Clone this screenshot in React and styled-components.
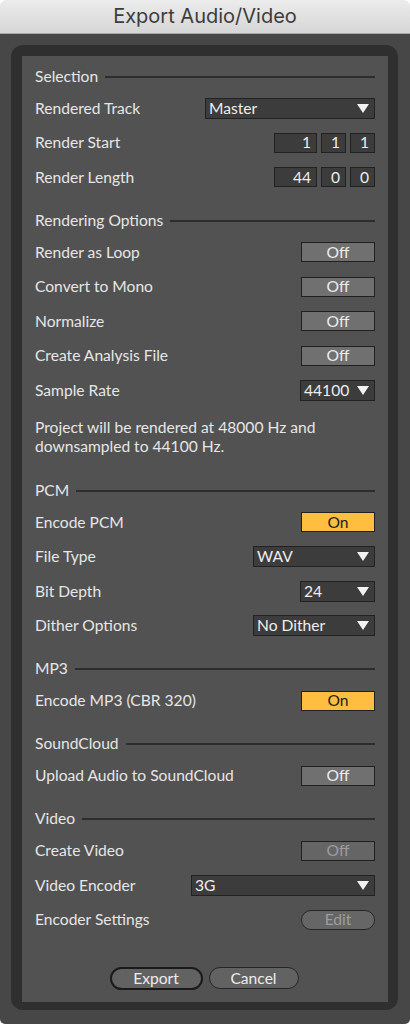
import React from 'react'
import styled, { createGlobalStyle } from 'styled-components'

const GlobalStyle = createGlobalStyle`
  html, body {
    margin: 0;
    padding: 0;
    background: #ffffff;
  }
  * { box-sizing: border-box; }
`

const Window = styled.div`
  width: 410px;
  height: 1024px;
  display: flex;
  flex-direction: column;
  border-radius: 6px 6px 5px 5px;
  overflow: hidden;
  font-family: Lato, "Open Sans", sans-serif;
`

const TitleBar = styled.div`
  height: 34px;
  flex: none;
  display: flex;
  align-items: center;
  justify-content: center;
  background: linear-gradient(#ececec, #d6d6d6);
  border-bottom: 1px solid #a9a9a9;
  color: #3c3c3c;
  font-family: Inter, "Liberation Sans", sans-serif;
  font-size: 20px;
  padding-bottom: 2px;
`

const Body = styled.div`
  flex: 1;
  display: flex;
  background: #474747;
  padding: 11px 12px 14px 11px;
`

const Frame = styled.div`
  flex: 1;
  display: flex;
  background: #2f2f2f;
  border-radius: 12px;
  padding: 11px 10px 8px 11px;
`

const Panel = styled.div`
  flex: 1;
  display: flex;
  flex-direction: column;
  background: #525252;
  padding: 9px 13px 12px 13px;
  color: #e6e6e6;
  font-size: 15.6px;
  line-height: 19px;
`

const Section = styled.div`
  display: flex;
  flex-direction: column;
  & + & {
    margin-top: 14.5px;
  }
`

const Header = styled.div`
  height: 22px;
  display: flex;
  align-items: center;
  gap: 7px;
  margin-bottom: 4px;

  &::after {
    content: '';
    flex: 1;
    height: 2px;
    margin-top: 1px;
    background: #2d2d2d;
  }
`

const Row = styled.div`
  height: 34.5px;
  display: flex;
  align-items: center;
  justify-content: space-between;
`

const Note = styled.p`
  margin: 10px 0 9px;
  line-height: 19px;
`

const Toggle = styled.div`
  width: 74px;
  height: 20px;
  display: flex;
  align-items: center;
  justify-content: center;
  border: 1px solid #202020;
  background: ${p => (p.$on ? '#ffbe40' : p.$disabled ? '#656565' : '#707070')};
  color: ${p => (p.$on ? '#1c1c1c' : p.$disabled ? '#9d9d9d' : '#ececec')};
`

const Select = styled.div`
  width: ${p => p.$w}px;
  height: 21px;
  display: flex;
  align-items: center;
  justify-content: space-between;
  padding: 0 5px 0 3px;
  border: 1px solid #222222;
  background: #3c3c3c;
  color: #ededed;
`

const Arrow = styled.span`
  width: 0;
  height: 0;
  border-left: 6px solid transparent;
  border-right: 6px solid transparent;
  border-top: 9px solid #f2f2f2;
`

const NumGroup = styled.div`
  display: flex;
  gap: 4px;
`

const NumBox = styled.div`
  width: ${p => p.$w}px;
  height: 20px;
  display: flex;
  align-items: center;
  justify-content: flex-end;
  padding-right: 5px;
  border: 1px solid #222222;
  background: #3c3c3c;
  color: #ededed;
`

const Pill = styled.div`
  width: ${p => p.$w}px;
  height: ${p => p.$h}px;
  display: flex;
  align-items: center;
  justify-content: center;
  border-radius: 12px;
  border: ${p => p.$strong ? '2px solid #1a1a1a' : '1.5px solid #262626'};
  background: ${p => (p.$disabled ? '#666666' : '#626262')};
  color: ${p => (p.$disabled ? '#9d9d9d' : '#ececec')};
`

const Footer = styled.div`
  margin-top: auto;
  display: flex;
  justify-content: center;
  gap: 6px;
  padding-right: 2px;
`

const Dropdown = ({ w, children }) => (
  <Select $w={w}>
    <span>{children}</span>
    <Arrow />
  </Select>
)

export default function App() {
  return (
    <>
      <GlobalStyle />
      <Window>
        <TitleBar>Export Audio/Video</TitleBar>
        <Body>
          <Frame>
            <Panel>
              <Section>
                <Header>Selection</Header>
                <Row>
                  Rendered Track
                  <Dropdown w={170}>Master</Dropdown>
                </Row>
                <Row>
                  Render Start
                  <NumGroup>
                    <NumBox $w={43}>1</NumBox>
                    <NumBox $w={25}>1</NumBox>
                    <NumBox $w={25}>1</NumBox>
                  </NumGroup>
                </Row>
                <Row>
                  Render Length
                  <NumGroup>
                    <NumBox $w={43}>44</NumBox>
                    <NumBox $w={25}>0</NumBox>
                    <NumBox $w={25}>0</NumBox>
                  </NumGroup>
                </Row>
              </Section>

              <Section>
                <Header>Rendering Options</Header>
                <Row>Render as Loop<Toggle>Off</Toggle></Row>
                <Row>Convert to Mono<Toggle>Off</Toggle></Row>
                <Row>Normalize<Toggle>Off</Toggle></Row>
                <Row>Create Analysis File<Toggle>Off</Toggle></Row>
                <Row>
                  Sample Rate
                  <Dropdown w={75}>44100</Dropdown>
                </Row>
                <Note>
                  Project will be rendered at 48000 Hz and
                  <br />
                  downsampled to 44100 Hz.
                </Note>
              </Section>

              <Section>
                <Header>PCM</Header>
                <Row>Encode PCM<Toggle $on>On</Toggle></Row>
                <Row>
                  File Type
                  <Dropdown w={122}>WAV</Dropdown>
                </Row>
                <Row>
                  Bit Depth
                  <Dropdown w={75}>24</Dropdown>
                </Row>
                <Row>
                  Dither Options
                  <Dropdown w={122}>No Dither</Dropdown>
                </Row>
              </Section>

              <Section>
                <Header>MP3</Header>
                <Row>Encode MP3 (CBR 320)<Toggle $on>On</Toggle></Row>
              </Section>

              <Section>
                <Header>SoundCloud</Header>
                <Row>Upload Audio to SoundCloud<Toggle>Off</Toggle></Row>
              </Section>

              <Section>
                <Header>Video</Header>
                <Row>Create Video<Toggle $disabled>Off</Toggle></Row>
                <Row>
                  Video Encoder
                  <Dropdown w={184}>3G</Dropdown>
                </Row>
                <Row>
                  Encoder Settings
                  <Pill $w={74} $h={20} $disabled>Edit</Pill>
                </Row>
              </Section>

              <Footer>
                <Pill $w={93} $h={23} $strong>Export</Pill>
                <Pill $w={90} $h={22}>Cancel</Pill>
              </Footer>
            </Panel>
          </Frame>
        </Body>
      </Window>
    </>
  )
}
